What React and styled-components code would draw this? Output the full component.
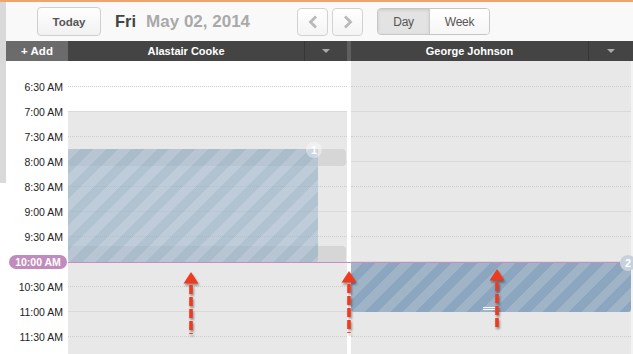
import React from 'react';
import styled, { createGlobalStyle } from 'styled-components';

const GlobalStyle = createGlobalStyle`
  html, body {
    margin: 0;
    padding: 0;
    background: #fff;
  }
  body {
    font-family: "Liberation Sans", Arial, Helvetica, sans-serif;
    overflow: hidden;
  }
`;

const SLOT = 25;
const START_MIN = 6 * 60;

const fmt = (mins) => {
  const h = Math.floor(mins / 60);
  const m = mins % 60;
  const hh = h > 12 ? h - 12 : h;
  return `${hh}:${m === 0 ? '00' : m} ${h >= 12 ? 'PM' : 'AM'}`;
};

const Page = styled.div`
  position: relative;
  width: 633px;
  height: 354px;
  box-sizing: border-box;
  border-top: 2px solid #f0a36b;
  display: flex;
  overflow: hidden;
`;

const LeftEdge = styled.div`
  width: 6px;
  flex: none;
  background: linear-gradient(to bottom, #d9d9d9 0, #d9d9d9 181px, #fff 181px);
`;

const Main = styled.div`
  flex: 1;
  min-width: 0;
  display: flex;
  flex-direction: column;
`;

const Toolbar = styled.div`
  height: 39px;
  flex: none;
  background: #f9f9f9;
  display: flex;
  align-items: center;
  padding-left: 31px;
`;

const TodayButton = styled.div`
  width: 64px;
  height: 29px;
  box-sizing: border-box;
  border: 1px solid #cfcfcf;
  border-radius: 4px;
  background: linear-gradient(#ffffff, #f1f1f1);
  display: flex;
  align-items: center;
  justify-content: center;
  font-size: 11.5px;
  font-weight: bold;
  color: #555;
`;

const DateTitle = styled.div`
  width: 182px;
  margin-left: 14px;
  display: flex;
  align-items: baseline;
  font-weight: bold;
`;

const Weekday = styled.span`
  font-size: 16.5px;
  color: #444;
`;

const DateText = styled.span`
  font-size: 17px;
  color: #a9a9a9;
  margin-left: 10px;
`;

const NavGroup = styled.div`
  display: flex;
  gap: 4px;
`;

const NavButton = styled.div`
  width: ${(p) => p.$w}px;
  height: 28px;
  box-sizing: border-box;
  border: 1px solid #d2d2d2;
  border-radius: 4px;
  background: linear-gradient(#ffffff, #f4f4f4);
  display: flex;
  align-items: center;
  justify-content: center;
`;

const ViewToggle = styled.div`
  margin-left: 14px;
  height: 27px;
  box-sizing: border-box;
  display: flex;
  border: 1px solid #c6c6c6;
  border-radius: 4px;
  overflow: hidden;
`;

const ViewOption = styled.div`
  width: ${(p) => p.$w}px;
  display: flex;
  align-items: center;
  justify-content: center;
  font-size: 12px;
  color: #555;
  letter-spacing: -0.3px;
  background: ${(p) => (p.$active ? '#e3e3e3' : 'linear-gradient(#ffffff, #f6f6f6)')};
  box-shadow: ${(p) => (p.$active ? 'inset 0 1px 3px rgba(0,0,0,0.12)' : 'none')};
  & + & {
    border-left: 1px solid #cccccc;
  }
`;

const HeaderBar = styled.div`
  height: 20px;
  flex: none;
  display: flex;
  background: #444;
`;

const AddButton = styled.div`
  width: 62px;
  flex: none;
  background: #6b6b6b;
  color: #fff;
  font-size: 11.5px;
  font-weight: bold;
  display: flex;
  align-items: center;
  justify-content: center;
`;

const ColumnHead = styled.div`
  width: ${(p) => p.$w}px;
  flex: none;
  display: flex;
`;

const HeadName = styled.div`
  flex: 1;
  display: flex;
  align-items: center;
  justify-content: center;
  color: #fff;
  font-size: 11px;
  font-weight: bold;
`;

const HeadMenu = styled.div`
  width: ${(p) => p.$w}px;
  flex: none;
  box-sizing: border-box;
  border-left: 1px solid #363636;
  display: flex;
  align-items: center;
  justify-content: center;
`;

const Caret = styled.span`
  width: 0;
  height: 0;
  border-left: 4px solid transparent;
  border-right: 4px solid transparent;
  border-top: 4px solid #aaa;
`;

const HeadSep = styled.div`
  width: 4px;
  flex: none;
  background: #5f5f5f;
`;

const Body = styled.div`
  flex: 1;
  position: relative;
  display: flex;
  overflow: hidden;
`;

const Gutter = styled.div`
  width: 62px;
  flex: none;
  box-sizing: border-box;
  padding-top: 13px;
  background: #fff;
`;

const TimeRow = styled.div`
  height: ${SLOT}px;
  display: flex;
  align-items: center;
  justify-content: flex-end;
  padding-right: ${(p) => (p.$now ? 1 : 5)}px;
  font-size: 10.5px;
  color: #222;
`;

const NowPill = styled.div`
  width: 58px;
  height: 14px;
  border-radius: 7px;
  background: #c18cbd;
  color: #fff;
  font-size: 10.5px;
  font-weight: bold;
  line-height: 14px;
  text-align: center;
`;

const Column = styled.div`
  position: relative;
  width: ${(p) => p.$w}px;
  flex: none;
`;

const Slot = styled.div`
  height: ${SLOT}px;
  box-sizing: border-box;
  background: ${(p) => (p.$off ? '#fff' : '#e8e8e8')};
  border-top: ${(p) =>
    p.$line === 'half'
      ? '1px dotted #cdcdcd'
      : p.$line === 'hour'
      ? '1px solid #dadada'
      : 'none'};
`;

const ColSep = styled.div`
  width: 4px;
  flex: none;
  background: #fff;
`;

const RightEdge = styled.div`
  width: 2px;
  flex: none;
  background: #f3f3f3;
`;

const Buffer = styled.div`
  position: absolute;
  left: 0;
  top: ${(p) => p.$top}px;
  height: ${(p) => p.$h}px;
  width: ${(p) => p.$w}px;
  border-radius: 4px;
  background: #d6d6d6;
`;

const tones = {
  faded:
    'repeating-linear-gradient(135deg, rgba(166,189,208,0.64) 0 9px, rgba(146,173,196,0.64) 9px 18px)',
  solid: 'repeating-linear-gradient(135deg, #a0b4c7 0 9px, #8ba6be 9px 18px)',
};

const EventBlock = styled.div`
  position: absolute;
  left: 0;
  top: ${(p) => p.$top}px;
  height: ${(p) => p.$h}px;
  width: ${(p) => p.$w}px;
  background: ${(p) => tones[p.$tone]};
  border-radius: 0 0 3px 3px;
  display: flex;
  align-items: flex-end;
  justify-content: center;
`;

const ResizeHandle = styled.div`
  width: 16px;
  height: 3px;
  box-sizing: border-box;
  border-top: 1px solid #fff;
  border-bottom: 1px solid #fff;
  margin-bottom: 2px;
`;

const Badge = styled.div`
  position: absolute;
  left: ${(p) => p.$x - 8}px;
  top: ${(p) => p.$y - 8}px;
  width: 16px;
  height: 16px;
  border-radius: 50%;
  background: ${(p) => p.$bg};
  color: #fff;
  font-size: 11px;
  font-weight: bold;
  display: flex;
  align-items: center;
  justify-content: center;
  z-index: 3;
`;

const NowLine = styled.div`
  position: absolute;
  left: 62px;
  right: 0;
  top: ${(p) => p.$top}px;
  height: 0;
  border-top: 1px solid #c98bc4;
  z-index: 2;
`;

const Arrow = styled.svg`
  position: absolute;
  left: ${(p) => p.$x - 11}px;
  top: ${(p) => p.$y - 3}px;
  filter: drop-shadow(1.5px 2px 1.2px rgba(0, 0, 0, 0.4));
  z-index: 5;
`;

const Chevron = ({ dir }) => (
  <svg width="10" height="14" viewBox="0 0 10 14">
    <polyline
      points={dir === 'left' ? '8,1.5 2.5,7 8,12.5' : '2,1.5 7.5,7 2,12.5'}
      fill="none"
      stroke="#b9b9b9"
      strokeWidth="2.8"
    />
  </svg>
);

const UpArrow = ({ x, y, len }) => (
  <Arrow $x={x} $y={y} width="22" height={len + 4} viewBox={`0 0 22 ${len + 4}`}>
    <polygon points="11,1 3.5,12.5 18.5,12.5" fill="#f03a1f" />
    <line
      x1="11"
      y1="14"
      x2="11"
      y2={len + 1}
      stroke="#f03a1f"
      strokeWidth="3.6"
      strokeDasharray="9 3"
    />
  </Arrow>
);

const yOf = (mins) => ((mins - START_MIN) / 30) * SLOT;

const columns = [
  { name: 'Alastair Cooke', width: 279, menu: 43, offHoursUntil: 7 * 60 },
  { name: 'George Johnson', width: 282, menu: 45, offHoursUntil: 0 },
];

const gutterTimes = Array.from({ length: 11 }, (_, i) => START_MIN + 30 + i * 30);
const slotTimes = Array.from({ length: 12 }, (_, i) => START_MIN + i * 30);
const NOW = 10 * 60;

function Slots({ offUntil }) {
  return slotTimes.map((t, i) => (
    <Slot
      key={t}
      $off={t < offUntil}
      $line={i === 0 ? 'none' : i % 2 === 1 ? 'half' : 'hour'}
    />
  ));
}

export default function App() {
  return (
    <>
      <GlobalStyle />
      <Page>
        <LeftEdge />
        <Main>
          <Toolbar>
            <TodayButton>Today</TodayButton>
            <DateTitle>
              <Weekday>Fri</Weekday>
              <DateText>May 02, 2014</DateText>
            </DateTitle>
            <NavGroup>
              <NavButton $w={31}>
                <Chevron dir="left" />
              </NavButton>
              <NavButton $w={31}>
                <Chevron dir="right" />
              </NavButton>
            </NavGroup>
            <ViewToggle>
              <ViewOption $w={51} $active>
                Day
              </ViewOption>
              <ViewOption $w={59}>Week</ViewOption>
            </ViewToggle>
          </Toolbar>

          <HeaderBar>
            <AddButton>+ Add</AddButton>
            <ColumnHead $w={columns[0].width}>
              <HeadName>{columns[0].name}</HeadName>
              <HeadMenu $w={columns[0].menu}>
                <Caret />
              </HeadMenu>
            </ColumnHead>
            <HeadSep />
            <ColumnHead $w={columns[1].width}>
              <HeadName>{columns[1].name}</HeadName>
              <HeadMenu $w={columns[1].menu}>
                <Caret />
              </HeadMenu>
            </ColumnHead>
          </HeaderBar>

          <Body>
            <Gutter>
              {gutterTimes.map((t) => (
                <TimeRow key={t} $now={t === NOW}>
                  {t === NOW ? <NowPill>{fmt(t)}</NowPill> : fmt(t)}
                </TimeRow>
              ))}
            </Gutter>

            <Column $w={279}>
              <Slots offUntil={columns[0].offHoursUntil} />
              <Buffer $top={88} $h={17} $w={278} />
              <Buffer $top={185} $h={16} $w={278} />
              <EventBlock $top={88} $h={113} $w={250} $tone="faded" />
              <Badge $x={246} $y={89} $bg="rgba(255,255,255,0.4)">
                1
              </Badge>
            </Column>

            <ColSep />

            <Column $w={280}>
              <Slots offUntil={columns[1].offHoursUntil} />
              <EventBlock $top={yOf(NOW) + 1} $h={50} $w={280} $tone="solid">
                <ResizeHandle />
              </EventBlock>
              <Badge $x={277} $y={202} $bg="#c6d1db">
                2
              </Badge>
            </Column>

            <RightEdge />

            <NowLine $top={yOf(NOW) + 1} />
          </Body>
        </Main>

        <UpArrow x={190.5} y={272} len={62} />
        <UpArrow x={349} y={271} len={62} />
        <UpArrow x={496.5} y={269} len={61} />
      </Page>
    </>
  );
}
